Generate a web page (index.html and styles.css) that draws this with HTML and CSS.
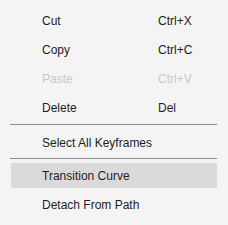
FILE: index.html
```html
<!DOCTYPE html>
<html lang="en">
<head>
    <meta charset="UTF-8">
    <title>Context Menu</title>
    <link rel="stylesheet" href="styles.css">
</head>
<body>
    <div class="menu">
        <div class="item"><span class="label">Cut</span><span class="key">Ctrl+X</span></div>
        <div class="item"><span class="label">Copy</span><span class="key">Ctrl+C</span></div>
        <div class="item disabled"><span class="label">Paste</span><span class="key">Ctrl+V</span></div>
        <div class="item"><span class="label">Delete</span><span class="key">Del</span></div>
        <div class="sep"></div>
        <div class="item"><span class="label">Select All Keyframes</span></div>
        <div class="sep sep-tight"></div>
        <div class="item active"><span class="label">Transition Curve</span></div>
        <div class="item"><span class="label">Detach From Path</span></div>
    </div>
</body>
</html>
```
FILE: styles.css
```css
html, body {
    margin: 0;
    background-color: #f4f4f4;
}
body {
    font-family: "Liberation Sans", Arial, sans-serif;
    font-size: 12px;
    color: #1e1e1e;
}
.menu {
    display: flex;
    flex-direction: column;
    padding: 6px 11px 0 10px;
}
.item {
    display: flex;
    align-items: center;
    height: 25px;
    margin: 2px 0 2px 1px;
    padding-left: 31px;
}
.item .label {
    width: 116px;
    white-space: nowrap;
}
.item.disabled {
    color: #c8c8c8;
}
.item.active {
    background-color: #dadada;
}
.sep {
    height: 1px;
    background-color: #8c8c8c;
    margin: 2px 0 3px;
}
.sep-tight {
    margin: 1px 0 2px;
}
```
